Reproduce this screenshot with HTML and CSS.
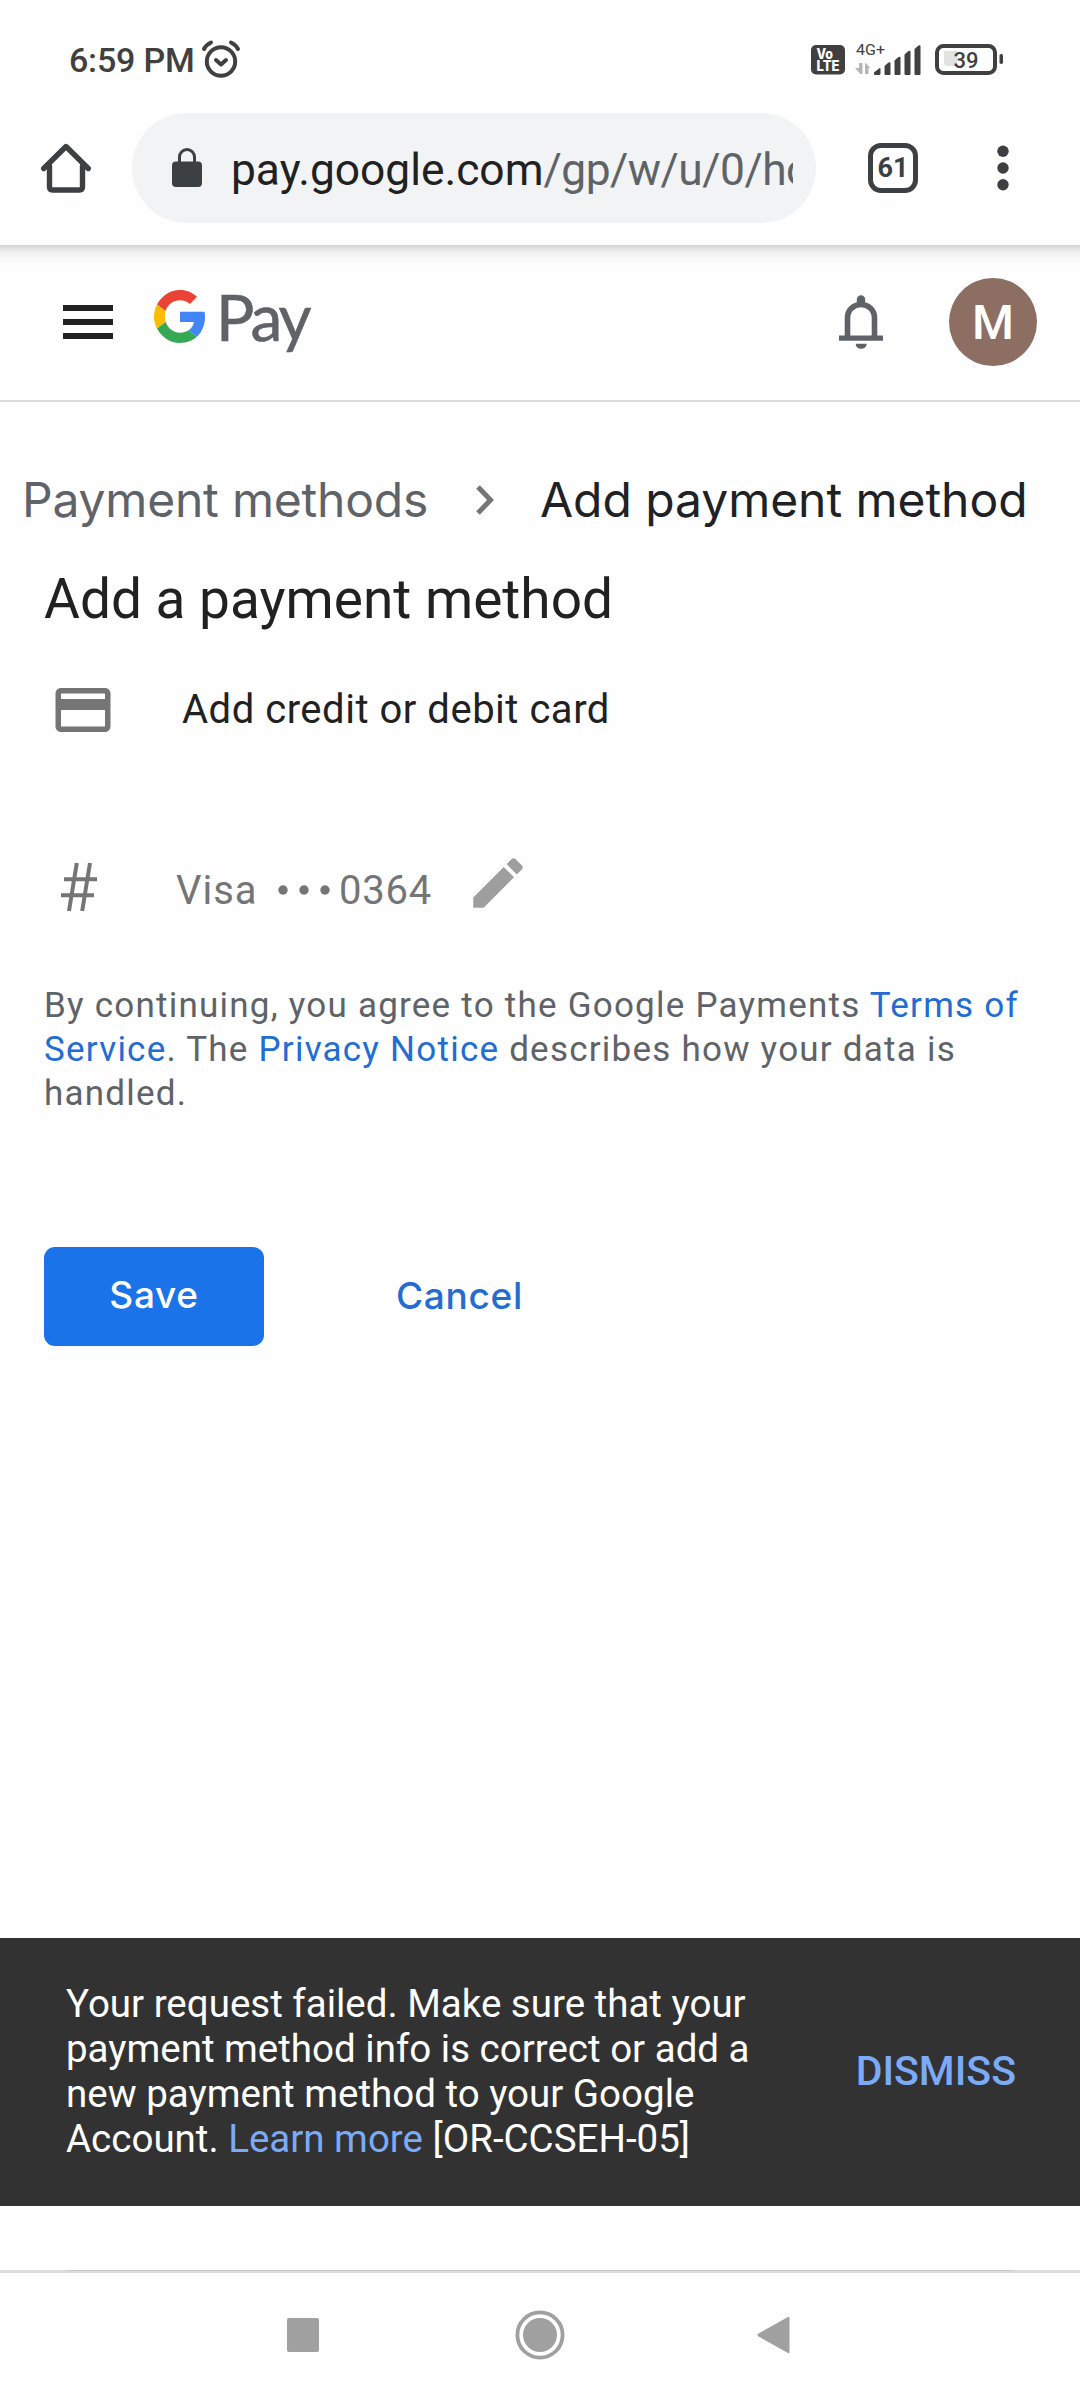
FILE: index.html
```html
<!DOCTYPE html>
<html lang="en">
<head>
<meta charset="utf-8">
<title>Google Pay</title>
<link rel="stylesheet" href="styles.css">
</head>
<body>
<div class="screen">
  <div class="status">
    <span class="clock">6:59 PM</span>
    <svg class="alarm" viewBox="0 0 40 38" width="40" height="38" fill="none" stroke="#404040" stroke-width="4" stroke-linecap="round" stroke-linejoin="round">
      <circle cx="20" cy="21.500" r="14.200"/><path d="M15 20l5 4.500 5-4.500M3 9c1.500-3 4-5 7-6.500M37 9c-1.500-3-4-5-7-6.500"/>
    </svg>
    <svg class="signals" viewBox="0 0 194 36" width="194" height="36">
      <rect x="1" y="3" width="34" height="29.500" rx="5" fill="#404040"/>
      <text class="volte" x="6.500" y="16.500" textLength="16.500" lengthAdjust="spacingAndGlyphs">Vo</text>
      <text class="volte" x="6.500" y="29" textLength="23" lengthAdjust="spacingAndGlyphs">LTE</text>
      <text class="net" x="46" y="12.500" textLength="29" lengthAdjust="spacingAndGlyphs">4G+</text>
      <path fill="#b5b5b5" d="M49 21h3.500v11h-2L45 26h4zM55 32h3.500v-6H60.500L55.500 21H55z"/>
      <g fill="#404040">
        <path d="M64 30.500l5-4q1.500-1 1.500 .5v4.500q0 1.500-1.500 1.500h-4q-1.500 0-1-2.500zM74.500 24l4-3.500q2-1 2 1V32q0 1-1 1h-4q-1 0-1-1zM84.500 18.500l4-3.500q2-1 2 1v16q0 1-1 1h-4q-1 0-1-1zM94.500 12.500l4-3.500q2-1 2 1v22q0 1-1 1h-4q-1 0-1-1zM104.500 7l4-3.500q2-1 2 1V32q0 1-1 1h-4q-1 0-1-1z"/>
        <rect x="189.500" y="12" width="3.500" height="10" rx="1.700"/>
      </g>
      <rect x="127" y="4" width="58" height="27" rx="6.500" fill="none" stroke="#404040" stroke-width="4"/>
      <path d="M134 9h13v15h-10q-3 0-3-3z" fill="#e2e2e2"/>
      <text class="charge" x="143.500" y="25.500" textLength="25" lengthAdjust="spacingAndGlyphs">39</text>
    </svg>
  </div>

  <div class="browser">
    <svg class="home" viewBox="0 0 50 50" width="50" height="50" fill="none" stroke="#3c4043" stroke-width="5.400" stroke-linejoin="round" stroke-linecap="round">
      <path d="M2.700 25.500L25 3.500l22.300 22"/><path d="M8.500 23v21q0 3 3 3h27q3 0 3-3V23"/>
    </svg>
    <div class="omnibox">
      <svg class="lock" viewBox="0 0 30 40" width="30" height="40">
        <rect x="0" y="13.500" width="30" height="25.500" rx="4" fill="#3c4043"/>
        <path d="M7.500 15V9a7.500 7.500 0 0 1 15 0v6" fill="none" stroke="#3c4043" stroke-width="3"/>
      </svg>
      <div class="url">pay.google.com<span>/gp/w/u/0/ho</span></div>
    </div>
    <div class="tabs">61</div>
    <svg class="more" viewBox="0 0 12 46" width="12" height="46" fill="#3c4043"><circle cx="6" cy="6.300" r="5.700"/><circle cx="6" cy="23" r="5.700"/><circle cx="6" cy="39.700" r="5.700"/></svg>
  </div>

  <header class="appbar">
    <svg class="menu" viewBox="0 0 50 34" width="50" height="34" fill="#212121"><path d="M0 0h50v6H0zM0 14h50v6H0zM0 28h50v6H0z"/></svg>
    <div class="logo">
      <svg viewBox="0 0 51 53" width="51" height="53">
        <path fill="#ea4335" d="M26 0C16 0 7.500 6 3 14.500l8.500 6.500C14 14 19.500 10.200 26 10.200c4 0 7.500 1.500 10 3.800l7-7.300C38.500 2.500 32.700 0 26 0z"/>
        <path fill="#fbbc04" d="M3 14.500C1 18.300 0 22.300 0 26.500s1 8.300 3 12l8.700-6.500C10.600 28.500 10.600 24.500 11.500 21z"/>
        <path fill="#34a853" d="M3 38.500C7.500 47 16 53 26 53c6.700 0 12.500-2.300 16.800-6.200l-8.300-6.500C32.300 41.800 29.500 42.700 26 42.700c-6.500 0-12-4.200-14.300-10.700z"/>
        <path fill="#4285f4" d="M26 21.700v10.200h14c-.6 3.300-2.500 6.300-5.500 8.400l8.300 6.500C47.800 42.200 51 35.500 51 27c0-1.800-.2-3.600-.5-5.300z"/>
      </svg>
      <span>Pay</span>
    </div>
    <svg class="bell" viewBox="0 0 44 54" width="44" height="54">
      <path fill="none" stroke="#5f6368" stroke-width="5.600" d="M8.500 43V23c0-8 6-13.500 13.500-13.500S35.500 15 35.500 23v20"/>
      <path fill="#5f6368" d="M0 40.500h44v5.300H0zM16.700 48.800h11c0 3-2.500 5-5.500 5s-5.500-2-5.500-5zM17.800 9V4.500a4.200 4.200 0 0 1 8.400 0V9z"/>
    </svg>
    <div class="avatar">M</div>
  </header>

  <main class="content">
    <nav class="crumbs">
      <a class="crumb-parent">Payment methods</a>
      <svg viewBox="0 0 18 30" width="18" height="30"><path d="M2 2l12.500 13L2 28" fill="none" stroke="#757575" stroke-width="5"/></svg>
      <span class="crumb-current">Add payment method</span>
    </nav>
    <h1 class="title">Add a payment method</h1>
    <div class="option">
      <svg viewBox="0 0 24 24" width="66" height="66" fill="#757575"><path d="M20 4H4c-1.110 0-1.990.89-1.990 2L2 18c0 1.110.89 2 2 2h16c1.110 0 2-.89 2-2V6c0-1.110-.89-2-2-2zm0 14H4v-6h16v6zm0-10H4V6h16v2z"/></svg>
      <span>Add credit or debit card</span>
    </div>
    <div class="card-row">
      <svg class="hash" viewBox="0 0 36 48" width="36" height="48" fill="none" stroke="#757575" stroke-width="4"><path d="M15.800 0L8 48M29 0l-7.800 48M3 16.300h33M0 32.200h33"/></svg>
      <span class="brand">Visa</span>
      <svg class="dots" viewBox="0 0 52 10" width="52" height="10" fill="#757575"><circle cx="5" cy="5" r="4.700"/><circle cx="26" cy="5" r="4.700"/><circle cx="47" cy="5" r="4.700"/></svg>
      <span class="digits">0364</span>
      <svg class="edit" viewBox="0 0 24 24" width="66" height="66" fill="#9e9e9e"><path d="M3 17.250V21h3.750L17.810 9.940l-3.750-3.750L3 17.250zM20.710 7.040c.39-.39.39-1.020 0-1.410l-2.340-2.340c-.39-.39-1.020-.39-1.410 0l-1.830 1.830 3.750 3.750 1.830-1.830z"/></svg>
    </div>
    <p class="legal">By continuing, you agree to the Google Payments <a>Terms of<br>Service</a>. The <a>Privacy Notice</a> describes how your data is<br>handled.</p>
    <div class="actions">
      <button class="save">Save</button>
      <button class="cancel">Cancel</button>
    </div>
  </main>

  <div class="snackbar">
    <p>Your request failed. Make sure that your<br>payment method info is correct or add a<br>new payment method to your Google<br>Account. <a>Learn more</a> [OR-CCSEH-05]</p>
    <button class="dismiss">DISMISS</button>
  </div>

  <div class="below"><div class="rule"></div></div>
  <div class="navbar">
    <svg viewBox="0 0 32 34" width="32" height="34"><rect width="32" height="34" rx="2" fill="#a0a0a0"/></svg>
    <svg class="nav-home" viewBox="0 0 50 50" width="50" height="50"><circle cx="25" cy="25" r="22.600" fill="none" stroke="#a0a0a0" stroke-width="3.800"/><circle cx="25" cy="25" r="17" fill="#a0a0a0"/></svg>
    <svg viewBox="0 0 33 38" width="33" height="38"><path d="M31 1q1.500-1 1.500 1v34q0 2-1.500 1L1.500 20.500q-2-1.500 0-3z" fill="#a0a0a0"/></svg>
  </div>
</div>
</body>
</html>
```
FILE: styles.css
```css
* { box-sizing: border-box; }
body, h1, p { margin: 0; }
body { background: #fefefe; font-family: Roboto, "Liberation Sans", sans-serif; color: #212121; }
svg { display: block; flex: none; overflow: visible; }
button { border: 0; background: none; padding: 0; font: inherit; letter-spacing: inherit; }
.screen { width: 1080px; height: 2400px; display: flex; flex-direction: column; overflow: hidden; }

.status { height: 91px; padding: 29px 76px 0 69px; display: flex; align-items: center; color: #404040; }
.clock { width: 132px; font-size: 34px; line-height: 40px; font-weight: 500; letter-spacing: -.2px; padding-bottom: 1px; white-space: nowrap; }
.alarm { margin-top: -2px; }
.signals { margin-left: auto; }
.volte { font: 800 14px Inter, sans-serif; fill: #fff; }
.net { font: 400 15px Roboto, sans-serif; fill: #404040; }
.charge { font: 500 22px Roboto, sans-serif; fill: #404040; }

.browser { height: 155px; padding: 0 71px 0 41px; display: flex; align-items: center; border-bottom: 1px solid #d4d4d4; }
.omnibox { width: 684px; height: 110px; margin-left: 41px; padding: 0 22px 0 40px; border-radius: 55px; background: #f1f3f4; display: flex; align-items: center; }
.url { width: 562px; margin-left: 29px; overflow: hidden; white-space: nowrap; font-size: 44.300px; line-height: 60px; padding-top: 4px; }
.url span { color: #5f6368; letter-spacing: -.5px; }
.tabs { width: 50px; height: 50px; margin-left: 52px; border: 5.500px solid #3c4043; border-radius: 13px; color: #3c4043; font-size: 27px; font-weight: 700; line-height: 40px; text-align: center; }
.more { margin-left: auto; }

.appbar { height: 156px; padding: 0 43px 2px 63px; border-bottom: 2px solid #dadce0; display: flex; align-items: center; background: linear-gradient(#d8d8d8, #eeeeee 6px, #f9f9f9 13px, #fefefe 21px); }
.logo { height: 53px; margin: -11px 0 0 41px; display: flex; align-items: center; }
.logo span { margin: 1px 0 0 11px; font: 400 64px/70px Lato, sans-serif; color: #5f6368; letter-spacing: -3px; -webkit-text-stroke: .6px #5f6368; }
.bell { margin-left: auto; }
.avatar { width: 88px; height: 88px; margin-left: 66px; border-radius: 50%; background: #8d6e63; color: #fff; font-size: 48px; font-weight: 500; line-height: 90px; text-align: center; }

.content { flex: 1; padding-top: 58px; }
.crumbs { height: 80px; padding-left: 22px; display: flex; align-items: center; font: 400 48px/80px Inter, sans-serif; white-space: nowrap; }
.crumb-parent { width: 454px; color: #5f6368; letter-spacing: -.2px; }
.crumb-current { margin-left: 46px; color: #202124; letter-spacing: -.05px; }
.title { margin: 24px 0 0 44px; font-size: 55px; line-height: 70px; font-weight: 400; }
.option { height: 66px; margin: 43px 0 0 50px; display: flex; align-items: center; gap: 66px; font-size: 40px; letter-spacing: .52px; }
.option span { padding-bottom: 2px; }
.card-row { height: 80px; margin: 107px 0 0 61px; display: flex; align-items: center; font-size: 40px; color: #757575; }
.hash { margin-top: -7px; }
.brand { width: 102px; margin-left: 79px; letter-spacing: 1px; }
.digits { width: 93px; margin-left: 9px; letter-spacing: .8px; }
.edit { margin: -14px 0 0 33px; }
.legal { margin: 54px 0 0 44px; font-size: 35px; line-height: 44px; letter-spacing: 1.230px; color: #5f6368; white-space: nowrap; }
.legal a { color: #226cd2; }
.actions { margin: 131px 0 0 44px; display: flex; font: 500 37px/96px Inter, sans-serif; letter-spacing: .7px; }
.save { width: 220px; height: 99px; padding-bottom: 3px; border-radius: 11px; background: #1a73e8; color: #fff; }
.cancel { margin-left: 132px; padding-bottom: 1px; color: #226cd2; }

.snackbar { height: 268px; padding: 0 64px 2px 66px; background: #323232; color: #fff; display: flex; align-items: center; justify-content: space-between; font-size: 38.500px; line-height: 45px; white-space: nowrap; }
.snackbar a { color: #7baaf7; }
.dismiss { padding-top: 1px; color: #7baaf7; font-size: 41px; font-weight: 500; }
.below { height: 67px; border-bottom: 3px solid #dcdcdc; display: flex; align-items: flex-end; background: #fff; }
.rule { height: 1px; width: 948px; margin-left: 66px; margin-bottom: -1px; background: #c8c8c8; }
.navbar { height: 127px; padding: 0 290px 3px 287px; display: flex; align-items: center; justify-content: space-between; }
.nav-home { margin-left: 4px; }
```
